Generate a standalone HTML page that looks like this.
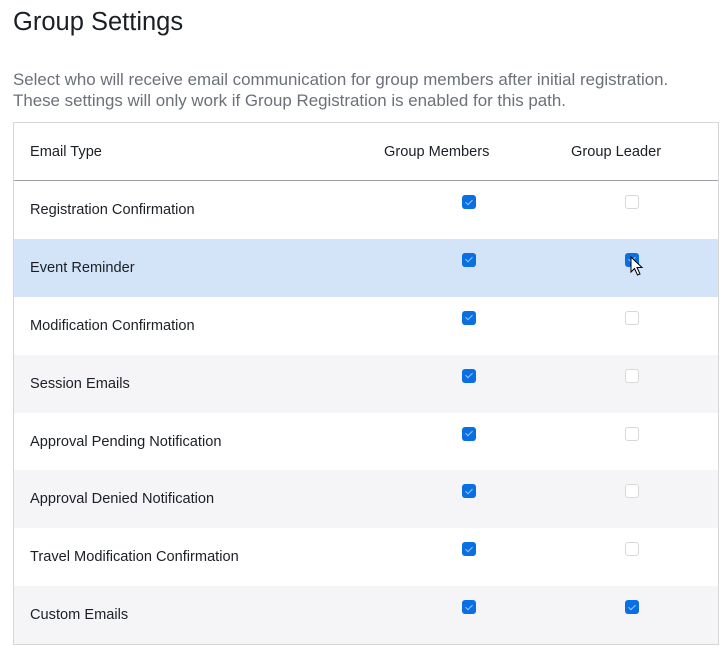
<!DOCTYPE html>
<html><head><style>
body{margin:0;background:#fff;font-family:"Liberation Sans",sans-serif;color:#1b1f26;width:728px;height:656px;overflow:hidden;position:relative}
h1{position:absolute;left:13px;top:8px;margin:0;font-weight:400;font-size:25.5px;color:#1b1f26}
.desc{position:absolute;left:13px;top:69px;font-size:16.9px;line-height:21px;color:#6b7079}
.tbl{position:absolute;left:13px;top:122px;width:706px;border:1px solid #d6d6d6;box-sizing:border-box}
.hd{height:57px;border-bottom:1px solid #9aa0a6;position:relative;font-size:14.6px}
.row{height:57.9px;position:relative;font-size:14.6px}
.lbl{position:absolute;left:16px;top:21px}
.c1{position:absolute;left:370px;top:21px}
.c2{position:absolute;left:557px;top:21px}
.cb{position:absolute;width:14px;height:14px;border-radius:3px;top:14px;box-sizing:border-box}
.on{background:#0a6fe3}
.on::after{content:"";position:absolute;left:4.5px;top:2.5px;width:3px;height:6px;border:solid #9cc7f5;border-width:0 1.5px 1.5px 0;transform:rotate(45deg)}
.off{border:1px solid #d9d9d9;background:#fff}
.m{left:448px}.l{left:611px}
.g{background:#f5f5f7}.h{background:#d3e4f8}
</style></head><body>
<h1>Group Settings</h1>
<div class="desc">Select who will receive email communication for group members after initial registration.<br>These settings will only work if Group Registration is enabled for this path.</div>
<div class="tbl">
<div class="hd"><span class="lbl">Email Type</span><span class="c1">Group Members</span><span class="c2">Group Leader</span></div>
<div class="row"><span class="lbl">Registration Confirmation</span><i class="cb on m"></i><i class="cb off l"></i></div>
<div class="row h"><span class="lbl">Event Reminder</span><i class="cb on m"></i><i class="cb on l"></i>
<svg style="position:absolute;left:616px;top:17px" width="14" height="22" viewBox="0 0 14 22"><path d="M1 1 L1 16 L4.5 12.5 L7.5 19 L10 18 L7 11.5 L12 11.5 Z" fill="#fff" stroke="#000" stroke-width="1"/></svg></div>
<div class="row"><span class="lbl">Modification Confirmation</span><i class="cb on m"></i><i class="cb off l"></i></div>
<div class="row g"><span class="lbl">Session Emails</span><i class="cb on m"></i><i class="cb off l"></i></div>
<div class="row"><span class="lbl">Approval Pending Notification</span><i class="cb on m"></i><i class="cb off l"></i></div>
<div class="row g"><span class="lbl">Approval Denied Notification</span><i class="cb on m"></i><i class="cb off l"></i></div>
<div class="row"><span class="lbl">Travel Modification Confirmation</span><i class="cb on m"></i><i class="cb off l"></i></div>
<div class="row g"><span class="lbl">Custom Emails</span><i class="cb on m"></i><i class="cb on l"></i></div>
</div>
</body></html>
